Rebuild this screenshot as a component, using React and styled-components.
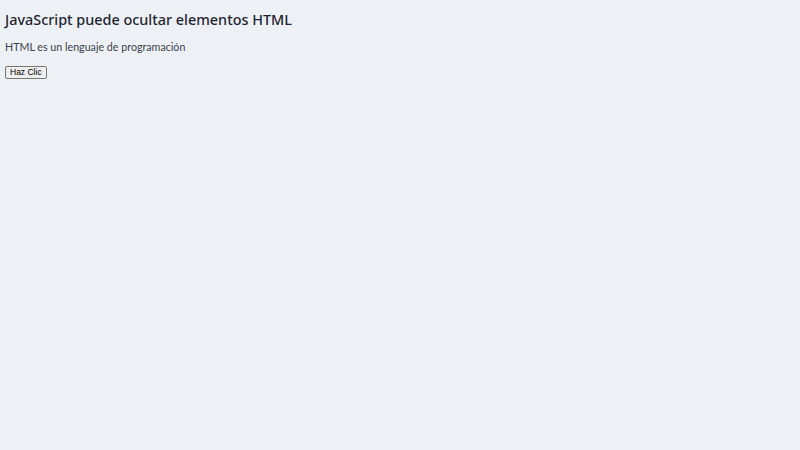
import React, { useState } from 'react';
import styled, { createGlobalStyle } from 'styled-components';

const GlobalStyle = createGlobalStyle`
  html, body {
    margin: 0;
    background: #edf1f6;
  }
  body {
    padding: 0 5px;
    font-family: Lato, "Noto Sans", sans-serif;
  }
`;

const Title = styled.h2`
  margin: 6px 0 0;
  font-family: "Noto Sans", Lato, sans-serif;
  font-size: 14.4px;
  font-weight: 500;
  color: #1f2430;
  line-height: 28px;
`;

const Text = styled.p`
  margin: 3px 0 0;
  font-family: Lato, "Noto Sans", sans-serif;
  font-size: 10.7px;
  color: #3a3f48;
  line-height: 20px;
  visibility: ${(p) => (p.$hidden ? 'hidden' : 'visible')};
`;

const Button = styled.button`
  display: block;
  margin-top: 9px;
  font-family: "Liberation Sans", Arial, sans-serif;
  font-size: 8.5px;
  line-height: 11px;
  padding: 0 4px;
  color: #000;
  background: #efefef;
  border: 1px solid #767676;
  border-radius: 2px;
`;

export default function App() {
  const [hidden, setHidden] = useState(false);
  return (
    <>
      <GlobalStyle />
      <Title>JavaScript puede ocultar elementos HTML</Title>
      <Text $hidden={hidden}>HTML es un lenguaje de programación</Text>
      <Button onClick={() => setHidden(true)}>Haz Clic</Button>
    </>
  );
}
